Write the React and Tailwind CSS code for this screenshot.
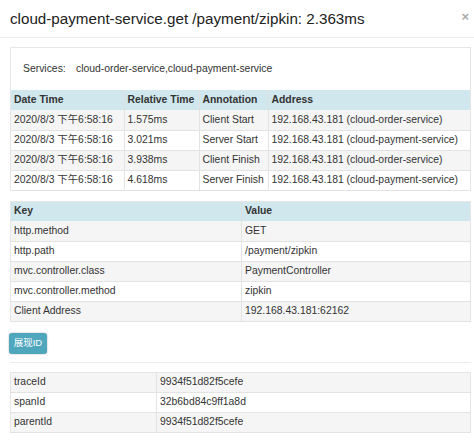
import React from "react";

const ann = [
  ["2020/8/3 下午6:58:16", "1.575ms", "Client Start", "192.168.43.181 (cloud-order-service)"],
  ["2020/8/3 下午6:58:16", "3.021ms", "Server Start", "192.168.43.181 (cloud-payment-service)"],
  ["2020/8/3 下午6:58:16", "3.938ms", "Client Finish", "192.168.43.181 (cloud-order-service)"],
  ["2020/8/3 下午6:58:16", "4.618ms", "Server Finish", "192.168.43.181 (cloud-payment-service)"],
];

const kv = [
  ["http.method", "GET"],
  ["http.path", "/payment/zipkin"],
  ["mvc.controller.class", "PaymentController"],
  ["mvc.controller.method", "zipkin"],
  ["Client Address", "192.168.43.181:62162"],
];

const ids = [
  ["traceId", "9934f51d82f5cefe"],
  ["spanId", "32b6bd84c9ff1a8d"],
  ["parentId", "9934f51d82f5cefe"],
];

const font = { fontFamily: '"Liberation Sans", Arial, "Noto Sans CJK SC", sans-serif' };

export default function App() {
  return (
    <div className="w-[474px] h-[440px] bg-white text-[#333] overflow-hidden" style={font}>
      <div className="h-[38px] pl-[10px] pr-[5px] flex items-center justify-between border-b border-[#ececec]">
        <div className="text-[15.2px] text-[#222] leading-none whitespace-nowrap">cloud-payment-service.get /payment/zipkin: 2.363ms</div>
        <div className="text-[13px] font-bold text-[#aaa] mt-[-4px]">×</div>
      </div>
      <div className="pl-[10px] pr-[3px] pt-[9px] text-[10.4px] whitespace-nowrap">
        <div className="border border-[#e6e6e6] border-b-0">
          <div className="h-[42px] flex items-center pl-[12px]">
            <span className="w-[53px]">Services:</span>
            <span>cloud-order-service,cloud-payment-service</span>
          </div>
          <table className="w-full border-collapse table-fixed">
            <thead>
              <tr className="h-[20px] bg-[#cfe7ed]">
                <th className="w-[113px] pl-[3px] border-r border-[#e0e0e0] font-bold text-left">Date Time</th>
                <th className="w-[75px] pl-[3px] border-r border-[#e0e0e0] font-bold text-left">Relative Time</th>
                <th className="w-[69px] pl-[3px] border-r border-[#e0e0e0] font-bold text-left">Annotation</th>
                <th className="pl-[3px] font-bold text-left">Address</th>
              </tr>
            </thead>
            <tbody>
              {ann.map((r, i) => (
                <tr key={i} className={"h-[20px] border-b border-[#e3e3e3] " + (i % 2 === 0 ? "bg-[#f5f5f5]" : "bg-white")}>
                  {r.map((c, j) => (
                    <td key={j} className={"pl-[3px] overflow-hidden " + (j < 3 ? "border-r border-[#e3e3e3]" : "")}>{c}</td>
                  ))}
                </tr>
              ))}
            </tbody>
          </table>
        </div>

        <table className="w-full border-collapse table-fixed mt-[10px] border border-[#e6e6e6]">
          <thead>
            <tr className="h-[20px] bg-[#cfe7ed]">
              <th className="w-[231px] pl-[3px] border-r border-[#e0e0e0] font-bold text-left">Key</th>
              <th className="pl-[3px] font-bold text-left">Value</th>
            </tr>
          </thead>
          <tbody>
            {kv.map((r, i) => (
              <tr key={i} className={"h-[20px] border-b border-[#e3e3e3] " + (i % 2 === 0 ? "bg-[#f5f5f5]" : "bg-white")}>
                <td className="pl-[3px] border-r border-[#e3e3e3]">{r[0]}</td>
                <td className="pl-[3px]">{r[1]}</td>
              </tr>
            ))}
          </tbody>
        </table>

        <div className="mt-[11px] flex">
          <button className="h-[21px] w-[38px] ml-[-1px] rounded-[3px] bg-[#4fa7be] text-white text-[9.5px] leading-none shadow-[0_0_2px_rgba(0,0,0,0.35)] flex items-center justify-center">展现ID</button>
        </div>

        <div className="mt-[8px] border-t border-[#ececec]"></div>

        <table className="w-full border-collapse table-fixed mt-[9px] border border-[#e6e6e6]">
          <tbody>
            {ids.map((r, i) => (
              <tr key={i} className={"h-[20px] border-b border-[#e3e3e3] " + (i % 2 === 0 ? "bg-[#f5f5f5]" : "bg-white")}>
                <td className="w-[146px] pl-[3px] border-r border-[#e3e3e3]">{r[0]}</td>
                <td className="pl-[3px]">{r[1]}</td>
              </tr>
            ))}
          </tbody>
        </table>
      </div>
    </div>
  );
}
